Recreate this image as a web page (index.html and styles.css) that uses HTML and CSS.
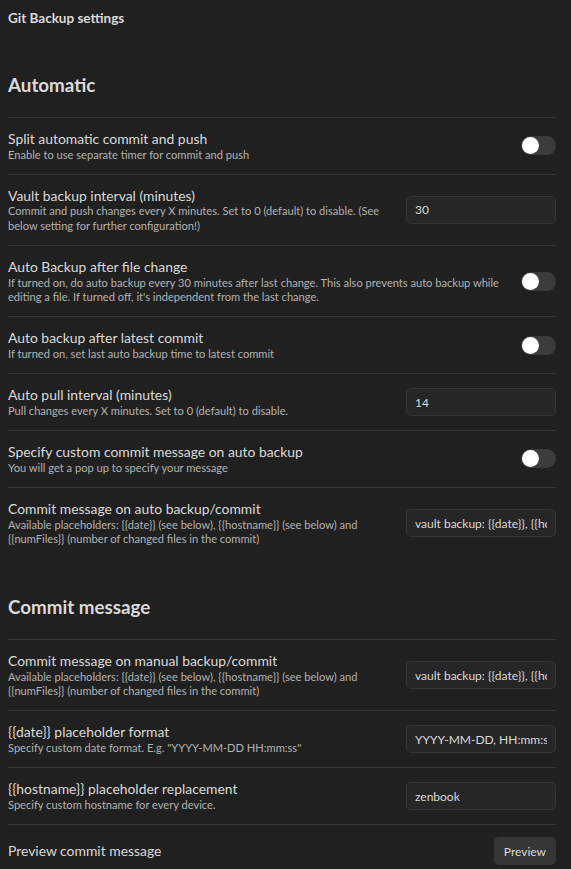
FILE: index.html
```html
<!DOCTYPE html>
<html lang="en">
<head>
<meta charset="utf-8">
<title>Git Backup settings</title>
<link rel="stylesheet" href="styles.css">
</head>
<body>
<div class="page">
  <div class="title">Git Backup settings</div>

  <h3 class="section-heading">Automatic</h3>

  <div class="setting-item">
    <div class="setting-info">
      <div class="setting-name">Split automatic commit and push</div>
      <div class="setting-desc">Enable to use separate timer for commit and push</div>
    </div>
    <div class="setting-control"><div class="toggle"><div class="knob"></div></div></div>
  </div>

  <div class="setting-item">
    <div class="setting-info">
      <div class="setting-name">Vault backup interval (minutes)</div>
      <div class="setting-desc">Commit and push changes every X minutes. Set to 0 (default) to disable. (See below setting for further configuration!)</div>
    </div>
    <div class="setting-control"><input class="text-input" type="text" value="30" readonly></div>
  </div>

  <div class="setting-item">
    <div class="setting-info">
      <div class="setting-name">Auto Backup after file change</div>
      <div class="setting-desc">If turned on, do auto backup every 30 minutes after last change. This also prevents auto backup while editing a file. If turned off, it's independent from the last change.</div>
    </div>
    <div class="setting-control"><div class="toggle"><div class="knob"></div></div></div>
  </div>

  <div class="setting-item">
    <div class="setting-info">
      <div class="setting-name">Auto backup after latest commit</div>
      <div class="setting-desc">If turned on, set last auto backup time to latest commit</div>
    </div>
    <div class="setting-control"><div class="toggle"><div class="knob"></div></div></div>
  </div>

  <div class="setting-item">
    <div class="setting-info">
      <div class="setting-name">Auto pull interval (minutes)</div>
      <div class="setting-desc">Pull changes every X minutes. Set to 0 (default) to disable.</div>
    </div>
    <div class="setting-control"><input class="text-input" type="text" value="14" readonly></div>
  </div>

  <div class="setting-item">
    <div class="setting-info">
      <div class="setting-name">Specify custom commit message on auto backup</div>
      <div class="setting-desc">You will get a pop up to specify your message</div>
    </div>
    <div class="setting-control"><div class="toggle"><div class="knob"></div></div></div>
  </div>

  <div class="setting-item">
    <div class="setting-info">
      <div class="setting-name">Commit message on auto backup/commit</div>
      <div class="setting-desc">Available placeholders: {{date}} (see below), {{hostname}} (see below) and {{numFiles}} (number of changed files in the commit)</div>
    </div>
    <div class="setting-control"><input class="text-input" type="text" value="vault backup: {{date}}, {{hostname}}" readonly></div>
  </div>

  <h3 class="section-heading">Commit message</h3>

  <div class="setting-item">
    <div class="setting-info">
      <div class="setting-name">Commit message on manual backup/commit</div>
      <div class="setting-desc">Available placeholders: {{date}} (see below), {{hostname}} (see below) and {{numFiles}} (number of changed files in the commit)</div>
    </div>
    <div class="setting-control"><input class="text-input" type="text" value="vault backup: {{date}}, {{hostname}}" readonly></div>
  </div>

  <div class="setting-item">
    <div class="setting-info">
      <div class="setting-name">{{date}} placeholder format</div>
      <div class="setting-desc">Specify custom date format. E.g. "YYYY-MM-DD HH:mm:ss"</div>
    </div>
    <div class="setting-control"><input class="text-input" type="text" value="YYYY-MM-DD, HH:mm:ss" readonly></div>
  </div>

  <div class="setting-item">
    <div class="setting-info">
      <div class="setting-name">{{hostname}} placeholder replacement</div>
      <div class="setting-desc">Specify custom hostname for every device.</div>
    </div>
    <div class="setting-control"><input class="text-input" type="text" value="zenbook" readonly></div>
  </div>

  <div class="setting-item">
    <div class="setting-info">
      <div class="setting-name">Preview commit message</div>
    </div>
    <div class="setting-control"><button class="btn" type="button">Preview</button></div>
  </div>
</div>
</body>
</html>
```

FILE: styles.css
```css
html, body {
  margin: 0;
  padding: 0;
  background: #202020;
}

body {
  font-family: Lato, "Open Sans", sans-serif;
  color: #dadada;
}

.page {
  padding: 8px 15px 0 8px;
}

.title {
  font-size: 13.5px;
  font-weight: 700;
  line-height: 20px;
  margin-bottom: 8px;
  color: #dadada;
}

.section-heading {
  margin: 0;
  padding: 37px 0 20px;
  font-size: 18.8px;
  line-height: 24px;
  font-weight: 700;
  color: #dadada;
}

.setting-item {
  display: flex;
  align-items: center;
  gap: 16px;
  padding: 12px 0;
  border-top: 1px solid #363636;
}

.setting-info {
  flex: 1 1 auto;
  min-width: 0;
}

.setting-name {
  font-size: 13.9px;
  line-height: 17.6px;
  color: #dadada;
}

.setting-desc {
  font-size: 11.1px;
  line-height: 14.3px;
  color: #b3b3b3;
}

.setting-control {
  flex: none;
  display: flex;
  justify-content: flex-end;
}

.toggle {
  width: 35px;
  height: 19px;
  border-radius: 10px;
  background: #3c3c3c;
  display: flex;
  align-items: center;
  padding: 0 1px;
  box-sizing: border-box;
}

.knob {
  width: 17px;
  height: 17px;
  border-radius: 50%;
  background: #ffffff;
}

.text-input {
  width: 150px;
  height: 28px;
  box-sizing: border-box;
  padding: 0 8px;
  background: #262626;
  border: 1px solid #363636;
  border-radius: 5px;
  color: #dadada;
  font-family: Lato, "Open Sans", sans-serif;
  font-size: 12px;
  outline: none;
}

.btn {
  height: 28px;
  padding: 0 10px;
  background: #363636;
  border: none;
  border-radius: 5px;
  color: #dadada;
  font-family: Lato, "Open Sans", sans-serif;
  font-size: 12px;
}
```
